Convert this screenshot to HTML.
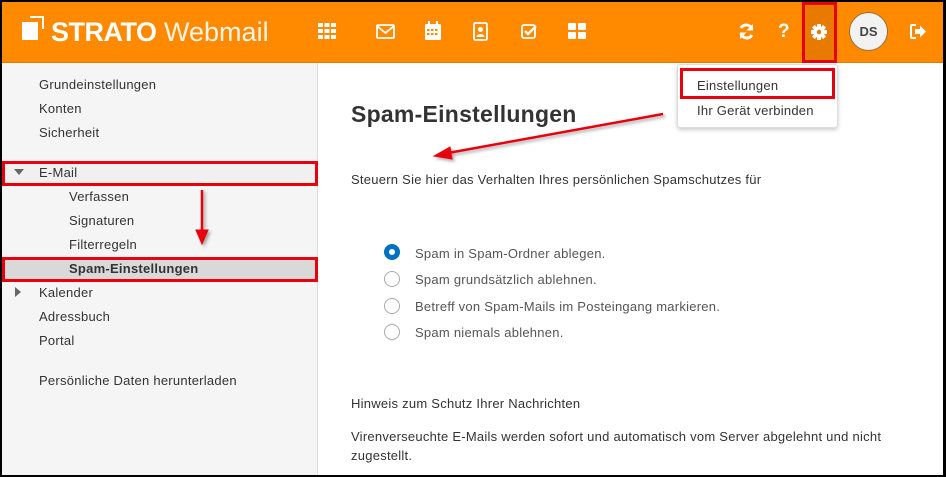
<!DOCTYPE html>
<html><head><meta charset="utf-8"><style>
*{margin:0;padding:0;box-sizing:border-box}
body{width:946px;height:477px;overflow:hidden;background:#000;font-family:"Liberation Sans",sans-serif;font-size:13px;color:#333;position:relative}
.frame{position:absolute;left:2px;top:2px;width:941px;height:473px;background:#fff;overflow:hidden}
.hdr{position:absolute;left:0;top:0;width:941px;height:61px;background:#ff8a00;border-bottom:1px solid #e57a00}
.side{position:absolute;left:0;top:61px;width:316px;height:420px;background:#f5f5f5;border-right:1px solid #ddd}
.t{position:absolute;white-space:nowrap;line-height:16px;letter-spacing:0.25px}
.ico{position:absolute}
.rb{position:absolute;border:3px solid #e8000d}
.radio{position:absolute;left:382px;width:16px;height:16px;border-radius:50%;border:1px solid #aaa;background:#fff}
</style></head><body>
<div class="frame">
<div class="hdr">
 <div style="position:absolute;left:20px;top:20px;width:16px;height:18px;background:#fff"></div>
 <div style="position:absolute;left:28px;top:14px;width:14px;height:13px;border-top:2px solid #fff;border-right:2px solid #fff"></div>
 <div class="t" style="left:49px;top:15px;color:#fff;font-size:27px;line-height:30px;letter-spacing:0"><b style="letter-spacing:-0.5px">STRATO</b> <span style="font-weight:300;color:#fff4e6">Webmail</span></div>
 <svg class="ico" style="left:316px;top:21px" width="18" height="16" viewBox="0 0 18 16" fill="#fff"><rect x="0" y="0" width="5" height="4"/><rect x="6.5" y="0" width="5" height="4"/><rect x="13" y="0" width="5" height="4"/><rect x="0" y="6" width="5" height="4"/><rect x="6.5" y="6" width="5" height="4"/><rect x="13" y="6" width="5" height="4"/><rect x="0" y="12" width="5" height="4"/><rect x="6.5" y="12" width="5" height="4"/><rect x="13" y="12" width="5" height="4"/></svg>
 <svg class="ico" style="left:374px;top:22px" width="19" height="15" viewBox="0 0 19 15" fill="none" stroke="#fff" stroke-width="1.8"><rect x="1" y="1" width="17" height="13" rx="1"/><path d="M1 2l8.5 7 8.5-7"/></svg>
 <svg class="ico" style="left:423px;top:19px" width="16" height="19" viewBox="0 0 16 19" fill="#fff"><rect x="0" y="3" width="16" height="16" rx="1"/><rect x="3" y="0" width="2" height="5"/><rect x="11" y="0" width="2" height="5"/><g fill="#ff8a00"><rect x="2" y="8" width="2.5" height="2"/><rect x="6" y="8" width="2.5" height="2"/><rect x="10" y="8" width="2.5" height="2"/><rect x="2" y="12" width="2.5" height="2"/><rect x="6" y="12" width="2.5" height="2"/><rect x="10" y="12" width="2.5" height="2"/></g></svg>
 <svg class="ico" style="left:471px;top:20px" width="16" height="19" viewBox="0 0 16 19"><rect x="1" y="1" width="13" height="17" rx="1.5" fill="none" stroke="#fff" stroke-width="1.8"/><circle cx="7.5" cy="7.5" r="2.5" fill="#fff"/><path d="M3.5 15c0-4 8-4 8 0z" fill="#fff"/></svg>
 <svg class="ico" style="left:519px;top:21px" width="17" height="17" viewBox="0 0 17 17" fill="none" stroke="#fff" stroke-width="1.8"><rect x="1" y="2" width="13" height="13" rx="2"/><path d="M4 8l3 3 8-8" stroke-width="2.4"/></svg>
 <svg class="ico" style="left:566px;top:21px" width="18" height="16" viewBox="0 0 18 16" fill="#fff"><rect x="0" y="0" width="8" height="7" rx="1"/><rect x="10" y="0" width="8" height="7" rx="1"/><rect x="0" y="9" width="8" height="7" rx="1"/><rect x="10" y="9" width="8" height="7" rx="1"/></svg>
 <svg class="ico" style="left:736px;top:21px" width="17" height="17" viewBox="0 0 17 17" fill="none" stroke="#fff" stroke-width="3"><path d="M14 6.5A6 6 0 0 0 3 5"/><path d="M3 10.5A6 6 0 0 0 14 12"/><path d="M15 1v6.5H8.5z" fill="#fff" stroke="none"/><path d="M2 16V9.5h6.5z" fill="#fff" stroke="none"/></svg>
 <div class="t" style="left:776px;top:19px;color:#fff;font-size:19px;font-weight:bold;line-height:22px">?</div>
 <div style="position:absolute;left:800px;top:0;width:35px;height:61px;background:#e87a00;border:3px solid #e8000d"></div>
 <svg class="ico" style="left:809px;top:22px" width="16" height="16" viewBox="-8 -8 16 16" fill="#fff"><g><rect x="-2" y="-8" width="4" height="16"/><rect x="-2" y="-8" width="4" height="16" transform="rotate(45)"/><rect x="-2" y="-8" width="4" height="16" transform="rotate(90)"/><rect x="-2" y="-8" width="4" height="16" transform="rotate(135)"/></g><circle r="5.5"/><circle r="2.2" fill="#e87a00"/></svg>
 <div style="position:absolute;left:847px;top:10px;width:39px;height:39px;border-radius:50%;background:#f2f2f2;border:1px solid #a06a30;text-align:center;line-height:37px;font-weight:bold;font-size:13px;color:#444">DS</div>
 <svg class="ico" style="left:908px;top:22px" width="17" height="15" viewBox="0 0 17 15" fill="#fff"><path d="M6 1H2a1 1 0 0 0-1 1v11a1 1 0 0 0 1 1h4" fill="none" stroke="#fff" stroke-width="2"/><path d="M5 5h5V1.5l6 6-6 6V10H5z"/></svg>
</div>
<div class="side"></div>
<div class="t" style="left:37px;top:75px">Grundeinstellungen</div>
<div class="t" style="left:37px;top:99px">Konten</div>
<div class="t" style="left:37px;top:123px">Sicherheit</div>
<div style="position:absolute;left:0;top:159px;width:316px;height:24px;background:#f0f0f0"></div>
<div class="rb" style="left:0;top:159px;width:316px;height:25px"></div>
<svg class="ico" style="left:12px;top:167px" width="10" height="6"><path d="M0 0h10L5 6z" fill="#666"/></svg>
<div class="t" style="left:37px;top:163px">E-Mail</div>
<div class="t" style="left:67px;top:187px">Verfassen</div>
<div class="t" style="left:67px;top:211px">Signaturen</div>
<div class="t" style="left:67px;top:235px">Filterregeln</div>
<div style="position:absolute;left:0;top:255px;width:316px;height:24px;background:#d9d9d9"></div>
<div class="rb" style="left:0;top:255px;width:316px;height:25px"></div>
<div class="t" style="left:67px;top:259px;font-weight:bold">Spam-Einstellungen</div>
<svg class="ico" style="left:13px;top:285px" width="6" height="10"><path d="M0 0v10l6-5z" fill="#666"/></svg>
<div class="t" style="left:37px;top:283px">Kalender</div>
<div class="t" style="left:37px;top:307px">Adressbuch</div>
<div class="t" style="left:37px;top:331px">Portal</div>
<div class="t" style="left:37px;top:371px">Persönliche Daten herunterladen</div>

<div class="t" style="left:349px;top:98px;font-size:23px;font-weight:bold;line-height:28px;color:#333">Spam-Einstellungen</div>
<div class="t" style="left:349px;top:170px">Steuern Sie hier das Verhalten Ihres persönlichen Spamschutzes für</div>
<div class="radio" style="top:242px;border:5px solid #0070c0"></div>
<div class="t" style="left:413px;top:244px;color:#555">Spam in Spam-Ordner ablegen.</div>
<div class="radio" style="top:269px"></div>
<div class="t" style="left:413px;top:270px;color:#555">Spam grundsätzlich ablehnen.</div>
<div class="radio" style="top:296px"></div>
<div class="t" style="left:413px;top:297px;color:#555">Betreff von Spam-Mails im Posteingang markieren.</div>
<div class="radio" style="top:322px"></div>
<div class="t" style="left:413px;top:323px;color:#555">Spam niemals ablehnen.</div>
<div class="t" style="left:349px;top:394px">Hinweis zum Schutz Ihrer Nachrichten</div>
<div class="t" style="left:349px;top:425px;line-height:19px;width:580px;white-space:normal">Virenverseuchte E-Mails werden sofort und automatisch vom Server abgelehnt und nicht zugestellt.</div>

<div style="position:absolute;left:675px;top:62px;width:161px;height:64px;background:#fff;border:1px solid #ddd;border-radius:3px;box-shadow:0 2px 4px rgba(0,0,0,.2)"></div>
<div class="rb" style="left:678px;top:66px;width:155px;height:31px"></div>
<div class="t" style="left:695px;top:76px">Einstellungen</div>
<div class="t" style="left:695px;top:101px">Ihr Gerät verbinden</div>

<svg class="ico" style="left:0;top:0" width="941" height="473">
 <defs><filter id="s"><feDropShadow dx="2" dy="2" stdDeviation="1.5" flood-opacity=".35"/></filter></defs>
 <g filter="url(#s)" stroke="#e8000d" fill="#e8000d">
  <line x1="661" y1="112" x2="446" y2="151" stroke-width="2.5"/>
  <path d="M432 154l16-9 2 12z"/>
  <line x1="200" y1="188" x2="200" y2="228" stroke-width="2.5"/>
  <path d="M194 228h12l-6 14z"/>
 </g>
</svg>
</div>
</body></html>
